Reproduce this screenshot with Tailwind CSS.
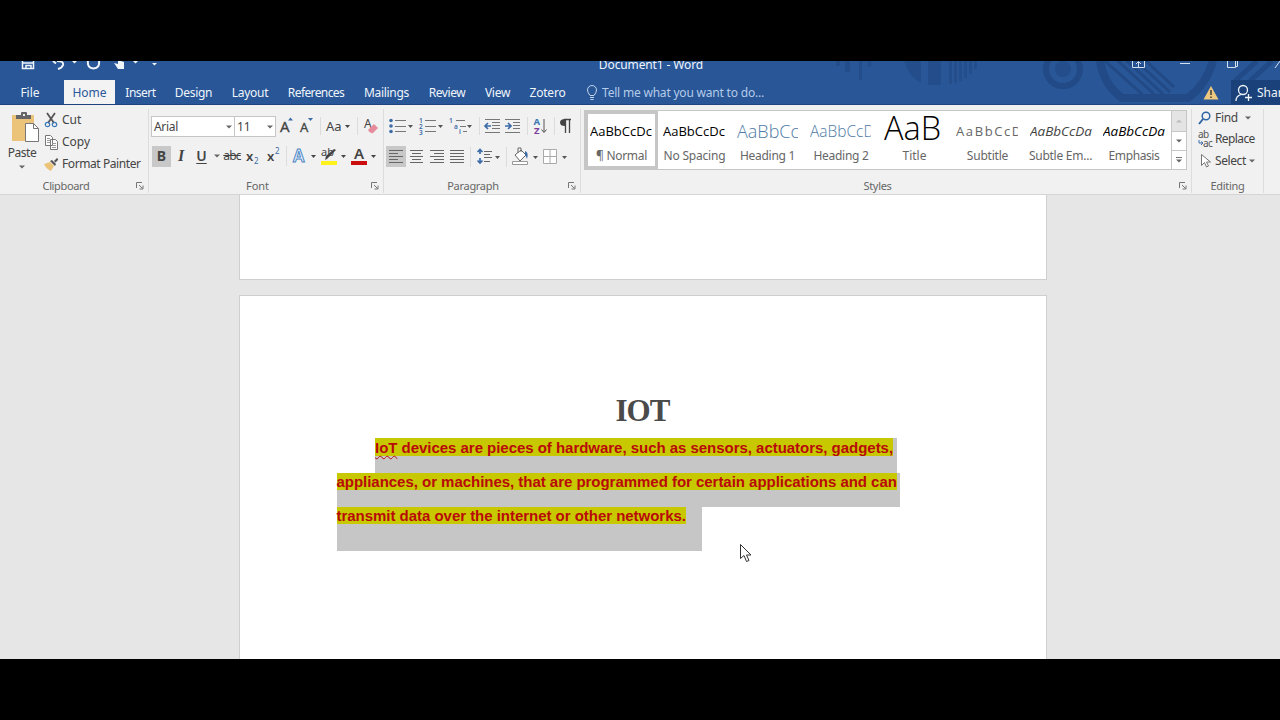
<!DOCTYPE html>
<html lang="en">
  <head>
    <meta charset="UTF-8" />
    <title>Document1 - Word</title>
    <script src="https://cdn.jsdelivr.net/npm/@tailwindcss/browser@4"></script>
  </head>
  <body class="bg-black w-[1280px] h-[720px] overflow-hidden py-[61px] font-['Noto_Sans',sans-serif] text-[12px] text-[#444]">
    <!-- shared symbols -->
    <svg class="hidden">
      <symbol id="caret" viewBox="0 0 6 4"><path d="M0 0.5h6L3 3.5z" fill="#666" /></symbol>
      <symbol id="launcher" viewBox="0 0 8 8"><path d="M0.5 6V0.5H6M3 3l3.5 3.5M7 3.5V7H3.5" fill="none" stroke="#777" /></symbol>
    </svg>

    <div class="h-[598px] flex flex-col overflow-hidden bg-[#e6e6e6]">
      <!-- title bar + tabs -->
      <header class="relative h-[44px] shrink-0 bg-[#285697] border-b border-[#1f4280] text-[#f0f5fb] overflow-hidden">
        <svg class="absolute left-[820px] top-0" width="460" height="43" fill="#234e8b">
          <path d="M16 0h4v5h-4zM25 0h5v11h-5zM39 0h3v19h-3zM48 0h3v6h-3z" />
          <path d="M84 0h17v22q-12-6-17-22zM108 0h13v24h-13zM129 0h3v23h-3zM134 0h3v22h-3zM139 0h3v20h-3zM144 0h3v17h-3zM149 0h3v13h-3zM154 0h3v8h-3z" />
          <circle cx="243" cy="8" r="17" fill="none" stroke="#214a86" stroke-width="6" />
          <circle cx="243" cy="8" r="8" />
          <path d="M280 0q4 24 22 37h66q18-13 25-37" fill="none" stroke="#214a86" stroke-width="8" />
          <path d="M285 0l37 33M298 0l36 33M307 0l36 33M316 0l34 31M326 0l28 26" stroke="#214a86" stroke-width="3" />
          <path d="M415 20l22-20M430 20l22-20" stroke="#214a86" stroke-width="5" />
        </svg>
        <div class="relative flex h-[19px]">
          <svg width="598" height="19" fill="none" stroke="#f0f5fb" stroke-width="1.5">
            <path d="M22.500 0v7.500h11V0M22.500 2h11M26 7.500v-3h5v3" />
            <path d="M53 0l3 2.500M57 0q7 0 6 4q-1 3-5 4" stroke-width="2" />
            <path d="M72 0h5l-2.500 2.500zM133 0h5l-2.500 2.500zM152 2h5l-2.500 2.500z" fill="#f0f5fb" stroke="none" />
            <path d="M88 0q-1 7 5.500 7.500Q100 7 99 0" stroke-width="2" />
            <path d="M118 0v3l-4-1 4 6h6V1l-3-1z" fill="#f0f5fb" stroke="none" />
          </svg>
          <div class="w-[106px] -mt-[5px] leading-[18px] text-center whitespace-nowrap tracking-[-0.12px]">Document1 - Word</div>
          <svg class="ml-auto" width="160" height="19" fill="none" stroke="#d5e0ef">
            <path d="M12.500 0v6.500h12V0M18.500 6V1M16 3l2.500-2.500L21 3M60 2.500h10M107.500 0v6.500h8V0M117.500 0v5.500h-2M155 7l5-7" />
          </svg>
        </div>
        <nav class="relative flex h-[25px] items-center leading-[26px] whitespace-nowrap text-center">
          <div class="w-[60px]">File</div>
          <div class="ml-1 w-[51px] h-[25px] leading-[26px] bg-[#f3f3f3] text-[#2b579a]">Home</div>
          <div class="w-[51px] tracking-[-0.5px]">Insert</div>
          <div class="w-[55px] tracking-[-0.3px]">Design</div>
          <div class="w-[58px] tracking-[-0.3px]">Layout</div>
          <div class="w-[74px] tracking-[-0.6px]">References</div>
          <div class="w-[67px] tracking-[-0.3px]">Mailings</div>
          <div class="w-[54px] tracking-[-0.4px]">Review</div>
          <div class="w-[47px] tracking-[-0.3px]">View</div>
          <div class="w-[53px] tracking-[-0.2px]">Zotero</div>
          <svg class="ml-3" width="16" height="18" fill="none" stroke="#c4d6ee"><path d="M4 11.500Q1.500 8.500 1.500 6a4.500 4.500 0 0 1 9 0q0 2.500-2.500 5.500zM4 13.500h4M4.500 15.500h3" /></svg>
          <div class="text-[#b5cbe9] tracking-[-0.2px]">Tell me what you want to do...</div>
          <svg class="ml-auto mr-3" width="16" height="16"><path d="M8 1L15.500 14.500H0.500z" fill="#edc87e" /><path d="M8 5v5M8 11.500v1.500" stroke="#333" stroke-width="1.400" /></svg>
          <div class="w-[49px] h-[25px] bg-[#1a4179] flex items-center overflow-hidden shrink-0">
            <svg class="ml-1 mr-[5px] shrink-0" width="17" height="18" fill="none" stroke="#f0f5fb" stroke-width="1.300"><circle cx="8" cy="6" r="4.500" /><path d="M1 17q0-5 5-6.500M10 13.500h7M13.500 10v7" /></svg>
            Share
          </div>
        </nav>
      </header>

      <!-- ribbon -->
      <section class="flex h-[90px] shrink-0 bg-[#f1f1f1] border-b border-[#d5d5d5] whitespace-nowrap">
        <!-- clipboard -->
        <div class="w-[149px] border-r border-[#dcdcdc] mt-1 mb-px flex flex-col justify-between">
          <div class="flex h-[66px]">
            <div class="w-[44px] flex flex-col items-center">
              <svg class="ml-1 mt-[2px] shrink-0" width="30" height="32">
                <path d="M3 4h22v26H3z" fill="#ebc479" />
                <path d="M7 4h5V2q0-1 1-1h4q1 0 1 1v2h4v4H7z" fill="#666" /><path d="M14 3h2v2h-2z" fill="#eee" />
                <path d="M16.500 12.500h8l5 5v13h-13z" fill="#fff" stroke="#777" /><path d="M24.500 12.500v5h5" fill="none" stroke="#777" />
              </svg>
              <span class="leading-[20px] tracking-[-0.5px]">Paste</span>
              <svg class="mt-[2px] shrink-0" width="6" height="4"><use href="#caret" /></svg>
            </div>
            <div class="flex flex-col leading-[22px]">
              <div class="flex items-center gap-1 h-[22px]">
                <svg width="14" height="16" fill="none" stroke="#555" stroke-width="1.800"><path d="M3 1l7 10M11 1L4 11" /><circle cx="3.500" cy="12.500" r="2.200" stroke="#3c78b4" stroke-width="1.200" /><circle cx="10.500" cy="12.500" r="2.200" stroke="#3c78b4" stroke-width="1.200" /></svg>
                Cut
              </div>
              <div class="flex items-center gap-1 h-[22px]">
                <svg width="14" height="16" fill="#fff" stroke="#777"><path d="M1.500 1.500h5l2 2v8h-7zM6.500 5.500h5l2 2v8h-7z" /><path d="M3 4.500h3M3 6.500h3M3 8.500h3M8 9.500h4M8 11.500h4M8 13.500h4" stroke="#999" /></svg>
                Copy
              </div>
              <div class="flex items-center gap-1 h-[23px] tracking-[-0.42px]">
                <svg width="14" height="16"><path d="M0 8l6-2 4 4-3 5Q2 13 0 8z" fill="#ebc479" /><path d="M6 5l2-1 4 4-1 2zM10 5l3-3 1.500 1.500-3 3z" fill="#555" /></svg>
                Format Painter
              </div>
            </div>
          </div>
          <div class="flex items-center text-[11px] leading-[14px] text-[#666]"><span class="w-[132px] text-center tracking-[-0.35px]">Clipboard</span><svg class="ml-1" width="8" height="8"><use href="#launcher" /></svg></div>
        </div>

        <!-- font -->
        <div class="w-[235px] border-r border-[#dcdcdc] mt-1 mb-px flex flex-col justify-between">
          <div>
            <div class="flex items-center h-[20px] mt-[7px] pl-[2px]">
              <div class="w-[84px] h-[21px] bg-white border border-[#c6c6c6] flex items-center justify-between pl-[2px] pr-[2px] pt-px tracking-[-0.3px]">Arial<svg width="6" height="4"><use href="#caret" /></svg></div>
              <div class="w-[42px] -ml-px h-[21px] bg-white border border-[#c6c6c6] flex items-center justify-between pl-[2px] pr-[2px] pt-px">11<svg width="6" height="4"><use href="#caret" /></svg></div>
              <svg width="104" height="20" fill="#444" font-family="Noto Sans">
                <text x="4" y="16" font-size="15" stroke="#444" stroke-width="0.3">A</text><path d="M12 4.500h5L14.500 1.500z" fill="#3c6ca8" />
                <text x="24" y="16" font-size="13" stroke="#444" stroke-width="0.3">A</text><path d="M32 2h5l-2.500 3z" fill="#3c6ca8" />
                <path d="M44.500 1v18M81.500 1v18" stroke="#dcdcdc" />
                <text x="50" y="15" font-size="13">Aa</text><path d="M69 9h5l-2.500 3z" />
                <text x="88" y="12" font-size="12">A</text><path d="M92 14l6-6 4 4-5 5q-3 1-5-3z" fill="#e58b9c" />
              </svg>
            </div>
            <div class="flex items-center h-[22px] mt-[9px] pl-[3px]">
              <div class="w-[19px] h-[21px] bg-[#c8c8c8] text-center font-bold text-[14px] leading-[20px]">B</div>
              <div class="w-[20px] text-center font-['Liberation_Serif',serif] font-bold italic text-[16px] leading-[20px]">I</div>
              <div class="w-[21px] text-center font-semibold text-[14px] leading-[18px] underline underline-offset-2">U</div>
              <svg class="mx-[2px]" width="6" height="4"><use href="#caret" /></svg>
              <div class="w-[20px] text-center line-through tracking-[-0.8px]">abc</div>
              <svg width="141" height="22" fill="#444" font-family="Noto Sans">
                <text x="4" y="16" font-size="13" font-weight="600">x</text><text x="12" y="19" font-size="8" fill="#3c6ca8">2</text>
                <text x="25" y="16" font-size="13" font-weight="600">x</text><text x="33" y="9" font-size="8" fill="#3c6ca8">2</text>
                <path d="M44.500 1v20" stroke="#dcdcdc" />
                <text x="51" y="17" font-size="17" font-weight="600" fill="#f4f8fc" stroke="#4b86c6">A</text><path d="M69 10h5l-2.500 3z" />
                <text x="79" y="11" font-size="11">ab</text><path d="M94 5l-9 9-2 1 1-4 8-7z" /><path d="M79 16h16v4H79z" fill="#fff21c" /><path d="M99 10h5l-2.500 3z" />
                <text x="112" y="14" font-size="15" font-weight="600">A</text><path d="M109 16h16v4h-16z" fill="#cc0d0d" /><path d="M129 10h5l-2.500 3z" />
              </svg>
            </div>
          </div>
          <div class="flex items-center text-[11px] leading-[14px] text-[#666]"><span class="w-[217px] text-center">Font</span><svg class="ml-[5px]" width="8" height="8"><use href="#launcher" /></svg></div>
        </div>

        <!-- paragraph -->
        <div class="w-[197px] border-r border-[#dcdcdc] mt-1 mb-px flex flex-col justify-between">
          <div>
            <svg class="mt-[7px]" width="195" height="20" fill="none" stroke="#777">
              <path d="M11 4.500h11M11 10.500h11M11 15.500h11M41 4.500h11M41 10.500h11M41 15.500h11M72 4.500h9M76 10.500h6M79 15.500h4" />
              <g fill="#3c6ca8" stroke="none"><circle cx="7" cy="4.500" r="1.800" /><circle cx="7" cy="10" r="1.800" /><circle cx="7" cy="15.500" r="1.800" /></g>
              <g fill="#3c6ca8" stroke="none" font-family="Noto Sans" font-weight="600" font-size="6.500"><text x="35" y="6.500">1</text><text x="35" y="12.500">2</text><text x="35" y="18.500">3</text><text x="65" y="6.500">1</text><text x="70" y="12.500">a</text><text x="75" y="18">i</text></g>
              <path d="M24 9h5l-2.500 3zM54 9h5l-2.500 3zM83 9h5l-2.500 3z" fill="#555" stroke="none" />
              <path d="M95.500 1v18M143.500 1v18M170.500 1v18" stroke="#dcdcdc" />
              <path d="M101 3.500h15M108 6.500h8M108 9.500h8M108 12.500h8M101 16.500h15M121 3.500h15M129 6.500h7M129 9.500h7M129 12.500h7M121 16.500h15" />
              <path d="M107 10h-6M104 7l-3 3 3 3M121 10h6M124 7l3 3-3 3" stroke="#3c6ca8" stroke-width="1.700" />
              <g stroke="none" font-family="Noto Sans" font-size="9.500" font-weight="700"><text x="149.500" y="9" fill="#3c78b4">A</text><text x="150" y="18" fill="#7b3c9b">Z</text></g>
              <path d="M160 3v13M157.500 13.500l2.500 3 2.500-3" stroke="#555" />
              <path d="M181.500 3v14M185.500 3v14M180 3.500h7" stroke="#444" stroke-width="1.300" /><path d="M181 3q-5 0-5 3.500t5 3.500z" fill="#444" stroke="none" />
            </svg>
            <svg class="mt-[10px]" width="195" height="22" fill="none" stroke="#666">
              <path d="M2 0h20v21H2z" fill="#c8c8c8" stroke="none" />
              <path d="M5 4.500h14M5 7.500h9M5 10.500h14M5 13.500h9M5 16.500h14M26 4.500h13M28 7.500h9M26 10.500h13M28 13.500h9M26 16.500h13M46 4.500h14M50 7.500h10M46 10.500h14M50 13.500h10M46 16.500h14M66 4.500h14M66 7.500h14M66 10.500h14M66 13.500h14M66 16.500h14" />
              <path d="M86.500 1v20M122.500 1v20" stroke="#dcdcdc" />
              <path d="M96 3v5M96 12v5M93.500 6L96 3.500 98.500 6M93.500 14.500L96 17l2.500-2.500" stroke="#3c6ca8" stroke-width="1.700" />
              <path d="M100 5.500h8M100 8.500h6M100 11.500h8M100 15.500h6" />
              <path d="M111 10h5l-2.500 3zM149 10h5l-2.500 3zM178 10h5l-2.500 3z" fill="#555" stroke="none" />
              <path d="M131 9l6-5 5 5-6 6zM134 7V2h3v4" fill="#fff" /><path d="M141 5q4 1 2 8l-2-5z" fill="#3c6ca8" stroke="none" /><path d="M128.500 15.500h15v3h-15z" fill="#fff" stroke="#999" />
              <path d="M159.500 3.500h13v14h-13zM166 4v13M160 10.500h12" fill="#fff" stroke="#aaa" />
            </svg>
          </div>
          <div class="flex items-center text-[11px] leading-[14px] text-[#666]"><span class="w-[178px] text-center tracking-[-0.3px]">Paragraph</span><svg class="ml-[6px]" width="8" height="8"><use href="#launcher" /></svg></div>
        </div>

        <!-- styles -->
        <div class="w-[611px] border-r border-[#dcdcdc] mt-1 mb-px flex flex-col justify-between">
          <div class="flex ml-[3px] mt-[1px] w-[603px] h-[60px] bg-white border border-[#c6c6c6] text-center text-[#666]">
            <div class="w-[73px] border-[3px] border-[#c6c6c6]">
              <div class="w-[62px] ml-[2px] h-[33px] leading-[34px] overflow-hidden text-left text-black font-['Open_Sans',sans-serif] text-[13px]">AaBbCcDc</div>
              <div class="leading-[18px] tracking-[-0.3px]">¶ Normal</div>
            </div>
            <div class="w-[73px] pt-[3px]">
              <div class="w-[62px] ml-[5px] h-[33px] leading-[34px] overflow-hidden text-left text-black font-['Open_Sans',sans-serif] text-[13px]">AaBbCcDc</div>
              <div class="leading-[18px] tracking-[-0.2px]">No Spacing</div>
            </div>
            <div class="w-[73px] pt-[3px]">
              <div class="w-[61px] ml-[6px] h-[33px] leading-[34px] overflow-hidden text-left text-[#4f7ba6] font-['Open_Sans',sans-serif] font-light text-[18px]">AaBbCc</div>
              <div class="leading-[18px] tracking-[-0.3px]">Heading 1</div>
            </div>
            <div class="w-[74px] pt-[3px]">
              <div class="w-[61px] ml-[6px] h-[33px] leading-[34px] overflow-hidden text-left text-[#4f7ba6] font-['Open_Sans',sans-serif] font-light text-[15.5px]">AaBbCcD</div>
              <div class="leading-[18px] tracking-[-0.3px]">Heading 2</div>
            </div>
            <div class="w-[73px] pt-[3px]">
              <div class="w-[58px] ml-[6px] h-[33px] leading-[27px] overflow-hidden text-left text-black font-['Open_Sans',sans-serif] font-light text-[32.5px]">AaB</div>
              <div class="leading-[18px]">Title</div>
            </div>
            <div class="w-[73px] pt-[3px]">
              <div class="w-[62px] ml-[5px] h-[33px] leading-[34px] overflow-hidden text-left text-[#666] font-['Open_Sans',sans-serif] text-[13px] tracking-[1.6px]">AaBbCcD</div>
              <div class="leading-[18px] tracking-[-0.2px]">Subtitle</div>
            </div>
            <div class="w-[73px] pt-[3px]">
              <div class="w-[62px] ml-[6px] h-[33px] leading-[34px] overflow-hidden text-left text-[#444] font-['Open_Sans',sans-serif] italic text-[13.5px]">AaBbCcDa</div>
              <div class="leading-[18px] tracking-[-0.25px]">Subtle Em...</div>
            </div>
            <div class="w-[74px] pt-[3px]">
              <div class="w-[62px] ml-[6px] h-[33px] leading-[34px] overflow-hidden text-left text-black font-['Open_Sans',sans-serif] italic text-[13.5px]">AaBbCcDa</div>
              <div class="leading-[18px] tracking-[-0.4px]">Emphasis</div>
            </div>
            <div class="w-[15px] border-l border-[#c6c6c6] flex flex-col">
              <div class="h-[20px] bg-[#e4e4e4] flex items-center justify-center"><svg class="rotate-180 opacity-30" width="6" height="4"><use href="#caret" /></svg></div>
              <div class="h-[20px] border-y border-[#c6c6c6] flex items-center justify-center"><svg width="6" height="4"><use href="#caret" /></svg></div>
              <div class="h-[18px] flex flex-col gap-px items-center justify-center"><div class="w-[6px] h-px bg-[#777]"></div><svg width="6" height="4"><use href="#caret" /></svg></div>
            </div>
          </div>
          <div class="flex items-center text-[11px] leading-[14px] text-[#666]"><span class="w-[593px] text-center tracking-[-0.3px]">Styles</span><svg class="ml-[5px]" width="8" height="8"><use href="#launcher" /></svg></div>
        </div>

        <!-- editing -->
        <div class="w-[72px] border-r border-[#dcdcdc] mt-1 mb-px flex flex-col justify-between">
          <div>
            <div class="flex items-center h-[18px] gap-[3px] pl-[6px]">
              <svg width="14" height="14" fill="none" stroke="#2f65a5"><circle cx="8" cy="5" r="3.800" stroke-width="1.500" /><path d="M5 8l-4 5" stroke-width="2" /></svg>
              <span class="tracking-[-0.3px]">Find</span>
              <svg class="ml-1" width="6" height="4"><use href="#caret" /></svg>
            </div>
            <div class="flex items-center h-[24px] gap-[2px] pl-[6px] tracking-[-0.6px]">
              <svg width="15" height="18" font-family="Noto Sans" font-size="10"><text x="0" y="8" fill="#555">ab</text><text x="5" y="17" fill="#555">ac</text><path d="M1 10v3h4M3 11.500l2 1.500-2 2" fill="none" stroke="#3c6ca8" /></svg>
              Replace
            </div>
            <div class="flex items-center h-[19px] gap-[3px] pl-[6px]">
              <svg width="14" height="16" fill="#fff" stroke="#777"><path d="M3.500 1.500v11l3-3 2 4.500 2-1-2-4h4z" /></svg>
              <span class="tracking-[-0.4px]">Select</span>
              <svg width="6" height="4"><use href="#caret" /></svg>
            </div>
          </div>
          <div class="text-[11px] leading-[14px] text-[#666] text-center tracking-[-0.3px]">Editing</div>
        </div>
      </section>

      <!-- document -->
      <main class="relative flex-1 flex flex-col items-center gap-[15px] pl-[6px] overflow-hidden">
        <div class="w-[808px] h-[85px] shrink-0 bg-white border border-t-0 border-[#cfcfcf]"></div>
        <div class="w-[808px] h-[420px] shrink-0 bg-white border border-[#cfcfcf] pl-[96.5px] whitespace-nowrap">
          <h1 class="mt-[96px] w-[612px] text-center font-['Liberation_Serif',serif] font-bold text-[31px] tracking-[-0.9px] leading-[37px] text-[#4a4a4a]">IOT</h1>
          <div class="mt-[9px] font-['Liberation_Sans',sans-serif] font-bold text-[15px] tracking-[-0.03px] text-[#b80a0a] flex flex-col items-start">
            <div class="ml-[38.5px] h-[35px] w-[522px] bg-[#c6c6c6]"><div class="w-[518px] h-[18px] leading-[19px] bg-[#c8c800]"><span class="underline decoration-wavy decoration-[0.5px] decoration-[#b80a0a] underline-offset-[2px]">IoT</span> devices are pieces of hardware, such as sensors, actuators, gadgets,</div></div>
            <div class="h-[34px] w-[563.5px] bg-[#c6c6c6]"><div class="w-[560px] h-[17px] leading-[18px] bg-[#c8c800]">appliances, or machines, that are programmed for certain applications and can</div></div>
            <div class="h-[44px] w-[365px] bg-[#c6c6c6]"><div class="w-[349px] h-[17px] leading-[18px] bg-[#c8c800]">transmit data over the internet or other networks.</div></div>
          </div>
        </div>
        <!-- mouse pointer -->
        <svg class="absolute left-[739px] top-[348px]" width="14" height="21" fill="#fff" stroke="#333"><path d="M1.500 1.500v14l3.500-3 2.500 6 2.500-1-2.500-5.500h4.500z" /></svg>
      </main>
    </div>
  </body>
</html>
